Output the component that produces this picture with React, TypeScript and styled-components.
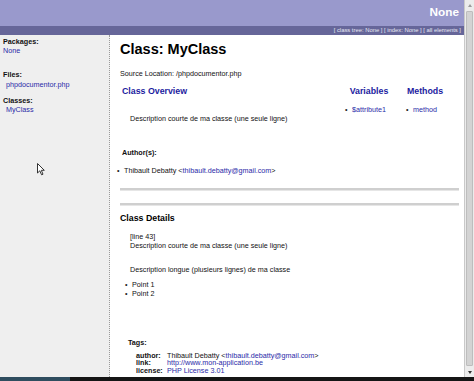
import React from 'react';
import styled, { createGlobalStyle } from 'styled-components';

const LINK = '#2a2aa8';

const Global = createGlobalStyle`
  html, body {
    margin: 0;
    padding: 0;
    overflow: hidden;
  }
  body {
    font-family: "Liberation Sans", Arial, sans-serif;
    color: #111;
  }
`;

const Window = styled.div`
  position: relative;
  width: 474px;
  height: 381px;
  display: flex;
  flex-direction: column;
  background: #fff;
  overflow: hidden;
`;

const Viewport = styled.div`
  flex: 1;
  min-height: 0;
  display: flex;
`;

const Page = styled.div`
  flex: 1;
  min-width: 0;
  display: flex;
  flex-direction: column;
`;

const Banner = styled.header`
  height: 26px;
  flex-shrink: 0;
  background: #9999cc;
  display: flex;
  justify-content: flex-end;
  align-items: center;
  padding: 0 5px 2px 0;
  box-sizing: border-box;
  color: #fff;
  font-size: 11.8px;
  font-weight: bold;
`;

const NavBar = styled.nav`
  height: 9px;
  flex-shrink: 0;
  background: #666699;
  color: #e8e8f4;
  font-size: 5.85px;
  line-height: 9px;
  text-align: right;
  padding-right: 3px;
  white-space: nowrap;
`;

const Body = styled.div`
  flex: 1;
  min-height: 0;
  display: flex;
  overflow: hidden;
  font-size: 7.2px;
  line-height: 9px;
`;

const Sidebar = styled.aside`
  width: 110px;
  flex-shrink: 0;
  box-sizing: border-box;
  background: #efefef;
  border-right: 1px dotted #9a9a9a;
  padding: 1.5px 3px;
`;

const SideSection = styled.div<{ $gap: number }>`
  margin-top: ${(p) => p.$gap}px;
`;

const SideLabel = styled.div`
  font-weight: bold;
`;

const SideLink = styled.a<{ $indent?: boolean; $gap?: number }>`
  display: block;
  color: ${LINK};
  text-decoration: none;
  padding-left: ${(p) => (p.$indent ? 3 : 0)}px;
  margin-top: ${(p) => p.$gap || 0}px;
`;

const Content = styled.main`
  flex: 1;
  min-width: 0;
  padding: 6px 5px 0 10px;
`;

const Title = styled.h1`
  margin: 0;
  font-size: 14.5px;
  line-height: 17px;
  font-weight: bold;
  color: #000;
`;

const Text = styled.div<{ $top?: number; $left?: number }>`
  margin-top: ${(p) => p.$top || 0}px;
  padding-left: ${(p) => p.$left || 0}px;
`;

const Overview = styled.div`
  margin: 8px 6px 0 0;
  display: grid;
  grid-template-columns: 1fr 56px 56px;
`;

const Heading = styled.h2<{ $blue?: boolean; $center?: boolean; $left?: number; $top?: number }>`
  margin: ${(p) => p.$top || 0}px 0 0 0;
  font-size: 8.8px;
  line-height: 11px;
  font-weight: bold;
  color: ${(p) => (p.$blue ? '#1c1ca0' : '#000')};
  text-align: ${(p) => (p.$center ? 'center' : 'left')};
  padding-left: ${(p) => p.$left || 0}px;
`;

const Cell = styled.div<{ $top: number; $left?: number; $center?: boolean }>`
  padding-top: ${(p) => p.$top}px;
  padding-left: ${(p) => p.$left || 0}px;
  text-align: ${(p) => (p.$center ? 'center' : 'left')};
`;

const Bullet = styled.div`
  position: relative;
  display: inline-block;

  &::before {
    content: '•';
    position: absolute;
    left: -7px;
    top: 0;
    color: #222;
  }
`;

const BulletRow = styled.div<{ $left: number; $top?: number }>`
  padding-left: ${(p) => p.$left}px;
  margin-top: ${(p) => p.$top || 0}px;
`;

const Link = styled.a`
  color: ${LINK};
  text-decoration: none;
`;

const Label = styled.div<{ $top: number; $left?: number }>`
  margin-top: ${(p) => p.$top}px;
  padding-left: ${(p) => p.$left || 0}px;
  font-weight: bold;
`;

const Rule = styled.div<{ $top: number }>`
  margin: ${(p) => p.$top}px 0 0 0;
  height: 2px;
  background: #cfcfcf;
  border-bottom: 1px solid #e6e6e6;
`;

const Tags = styled.div`
  margin-top: 5px;
  padding-left: 16px;
  display: grid;
  grid-template-columns: 31px auto;
  line-height: 7.8px;
`;

const TagName = styled.span`
  font-weight: bold;
`;

const Scrollbar = styled.div`
  width: 10px;
  flex-shrink: 0;
  box-sizing: border-box;
  background: #ececec;
  border-left: 1px solid #c9c9c9;
  display: flex;
  flex-direction: column;
  align-items: center;
`;

const Arrow = styled.div<{ $down?: boolean }>`
  height: 10px;
  display: flex;
  align-items: center;
  justify-content: center;
  flex-shrink: 0;

  &::after {
    content: '';
    border-left: 2.5px solid transparent;
    border-right: 2.5px solid transparent;
    ${(p) =>
      p.$down ? 'border-top: 3px solid #333;' : 'border-bottom: 3px solid #9a9a9a;'}
  }
`;

const Thumb = styled.div`
  flex: 1;
  width: 7px;
  margin: 1px 0;
  box-sizing: border-box;
  background: #d3d3d3;
  border: 1px solid #bdbdbd;
  border-radius: 1px;
`;

const Taskbar = styled.div`
  height: 4px;
  flex-shrink: 0;
  display: flex;
  background: #151515;
`;

const TaskButton = styled.div`
  width: 70px;
  background: #2f4d5f;
`;

const Cursor = styled.svg`
  position: absolute;
  left: 37px;
  top: 163px;
`;

export default function App() {
  return (
    <>
      <Global />
      <Window>
        <Viewport>
          <Page>
            <Banner>None</Banner>
            <NavBar>[ class tree: None ] [ index: None ] [ all elements ]</NavBar>
            <Body>
              <Sidebar>
                <SideLabel>Packages:</SideLabel>
                <SideLink>None</SideLink>
                <SideSection $gap={15}>
                  <SideLabel>Files:</SideLabel>
                  <SideLink $indent $gap={1}>phpdocumentor.php</SideLink>
                </SideSection>
                <SideSection $gap={7}>
                  <SideLabel>Classes:</SideLabel>
                  <SideLink $indent>MyClass</SideLink>
                </SideSection>
              </Sidebar>

              <Content>
                <Title>Class: MyClass</Title>
                <Text $top={10.5}>Source Location: /phpdocumentor.php</Text>

                <Overview>
                  <Heading $blue $left={2}>Class Overview</Heading>
                  <Heading $blue $center>Variables</Heading>
                  <Heading $blue $center>Methods</Heading>
                  <Cell $top={17} $left={10}>
                    Description courte de ma classe (une seule ligne)
                  </Cell>
                  <Cell $top={8} $center>
                    <Bullet>
                      <Link>$attribute1</Link>
                    </Bullet>
                  </Cell>
                  <Cell $top={8} $center>
                    <Bullet>
                      <Link>method</Link>
                    </Bullet>
                  </Cell>
                </Overview>

                <Label $top={25} $left={2}>Author(s):</Label>
                <BulletRow $left={4} $top={9}>
                  <Bullet>
                    Thibault Debatty &lt;<Link>thibault.debatty@gmail.com</Link>&gt;
                  </Bullet>
                </BulletRow>

                <Rule $top={13.5} />
                <Rule $top={12} />

                <Heading $top={6.5}>Class Details</Heading>
                <Text $top={8} $left={10}>[line 43]</Text>
                <Text $left={10}>Description courte de ma classe (une seule ligne)</Text>
                <Text $top={15} $left={10}>
                  Description longue (plusieurs lignes) de ma classe
                </Text>
                <BulletRow $left={12} $top={6}>
                  <Bullet>Point 1</Bullet>
                </BulletRow>
                <BulletRow $left={12}>
                  <Bullet>Point 2</Bullet>
                </BulletRow>

                <Label $top={40} $left={8}>Tags:</Label>
                <Tags>
                  <TagName>author:</TagName>
                  <span>
                    Thibault Debatty &lt;<Link>thibault.debatty@gmail.com</Link>&gt;
                  </span>
                  <TagName>link:</TagName>
                  <Link>http://www.mon-application.be</Link>
                  <TagName>license:</TagName>
                  <Link>PHP License 3.01</Link>
                </Tags>
              </Content>
            </Body>
          </Page>
          <Scrollbar>
            <Arrow />
            <Thumb />
            <Arrow $down />
          </Scrollbar>
        </Viewport>
        <Taskbar>
          <TaskButton />
        </Taskbar>
        <Cursor width="9" height="13" viewBox="0 0 9 13">
          <path
            d="M0.5 0.5 L0.5 10 L2.8 7.8 L4.6 11.8 L6 11.2 L4.3 7.3 L7.3 7.3 Z"
            fill="#fff"
            stroke="#333"
            strokeWidth="1"
            strokeLinejoin="round"
          />
        </Cursor>
      </Window>
    </>
  );
}
